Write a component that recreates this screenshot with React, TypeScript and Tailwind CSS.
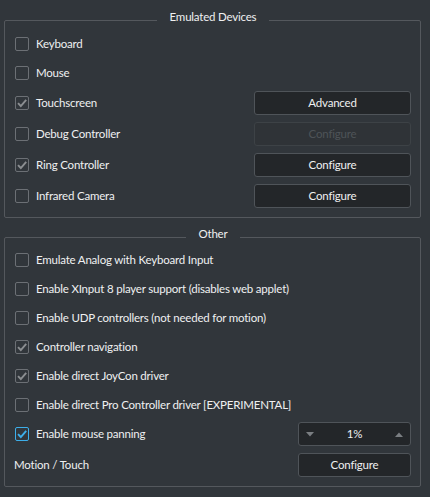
import type { ReactNode } from "react"

const font = { fontFamily: "Lato, 'Liberation Sans', sans-serif" }

function CheckBox({ checked, accent }: { checked?: boolean; accent?: boolean }) {
  return (
    <span
      className={`flex h-[14px] w-[14px] shrink-0 items-center justify-center rounded-[2px] border ${
        accent ? "border-[#3daee9]" : "border-[#6c7075]"
      }`}
    >
      {checked && (
        <svg viewBox="0 0 12 12" className="h-[12px] w-[12px]">
          <path
            d="M2 6.2 L4.8 9 L10.2 2.8"
            fill="none"
            stroke={accent ? "#3daee9" : "#8b8e91"}
            strokeWidth="1.9"
          />
        </svg>
      )}
    </span>
  )
}

function Check({ label, checked, accent }: { label: string; checked?: boolean; accent?: boolean }) {
  return (
    <div className="flex items-center gap-[7px]">
      <CheckBox checked={checked} accent={accent} />
      <span className="whitespace-nowrap">{label}</span>
    </div>
  )
}

function Button({ children, disabled, wide }: { children: ReactNode; disabled?: boolean; wide?: boolean }) {
  return (
    <button
      className={`flex h-6 items-center justify-center rounded-[3px] border ${wide ? "w-[157px]" : "w-[113px]"} ${
        disabled
          ? "border-[#3d4246] bg-[#2f3337] text-[#4e5357]"
          : "border-[#4f5459] bg-[#232629] text-[#eff0f1]"
      }`}
    >
      {children}
    </button>
  )
}

function Group({ title, children, className = "" }: { title: string; children: ReactNode; className?: string }) {
  return (
    <fieldset className={`ml-[4px] mr-[9px] rounded-[2px] border border-[#54585d] pl-[10px] pr-[9px] ${className}`}>
      <legend className="mx-auto px-[13px] pb-[6px] leading-[16px]">{title}</legend>
      {children}
    </fieldset>
  )
}

const devices = [
  { label: "Keyboard" },
  { label: "Mouse" },
  { label: "Touchscreen", checked: true, button: "Advanced" },
  { label: "Debug Controller", button: "Configure", disabled: true },
  { label: "Ring Controller", checked: true, button: "Configure" },
  { label: "Infrared Camera", button: "Configure" },
]

const other = [
  { label: "Emulate Analog with Keyboard Input" },
  { label: "Enable XInput 8 player support (disables web applet)" },
  { label: "Enable UDP controllers (not needed for motion)" },
  { label: "Controller navigation", checked: true },
  { label: "Enable direct JoyCon driver", checked: true },
  { label: "Enable direct Pro Controller driver [EXPERIMENTAL]" },
]

export default function App() {
  return (
    <div
      className="h-[497px] w-[430px] overflow-hidden bg-[#31363b] pt-[9px] text-[11.5px] tracking-[-0.2px] text-[#eff0f1]"
      style={font}
    >
      <Group title="Emulated Devices" className="pb-[9px] pt-[2px]">
        <div className="flex flex-col gap-[7px]">
          {devices.map((d) => (
            <div key={d.label} className={`flex items-center justify-between ${d.button ? "h-6" : "h-[22px]"}`}>
              <Check label={d.label} checked={d.checked} />
              {d.button && (
                <Button wide disabled={d.disabled}>
                  {d.button}
                </Button>
              )}
            </div>
          ))}
        </div>
      </Group>

      <Group title="Other" className="mt-[8px] pb-[9px] pt-[1px]">
        <div className="flex flex-col gap-[7px]">
          {other.map((o) => (
            <div key={o.label} className="flex h-[22px] items-center">
              <Check label={o.label} checked={o.checked} />
            </div>
          ))}
          <div className="mt-[-1px] flex h-6 items-center justify-between">
            <Check label="Enable mouse panning" checked accent />
            <div className="flex h-6 w-[113px] items-center justify-between rounded-[3px] border border-[#4f5459] bg-[#232629] px-[7px]">
              <svg viewBox="0 0 8 5" className="h-[5px] w-[8px]">
                <path d="M0 0 H8 L4 4.5 Z" fill="#7a7e82" />
              </svg>
              <span>1%</span>
              <svg viewBox="0 0 8 5" className="h-[5px] w-[8px]">
                <path d="M0 5 H8 L4 0.5 Z" fill="#7a7e82" />
              </svg>
            </div>
          </div>
          <div className="flex h-6 items-center justify-between">
            <span className="-ml-px">Motion / Touch</span>
            <Button>Configure</Button>
          </div>
        </div>
      </Group>
    </div>
  )
}
